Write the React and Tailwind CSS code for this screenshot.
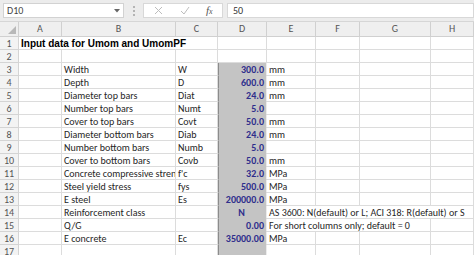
import React from "react";

const COLS = "grid grid-cols-[19px_43px_114px_42px_49px_49px_44px_71px_1fr]";
const FONT = { fontFamily: "Carlito, Lato, 'Liberation Sans', sans-serif" };

const rows = [
  [3, "Width", "W", "300.0", "mm"],
  [4, "Depth", "D", "600.0", "mm"],
  [5, "Diameter top bars", "Diat", "24.0", "mm"],
  [6, "Number top bars", "Numt", "5.0", ""],
  [7, "Cover to top bars", "Covt", "50.0", "mm"],
  [8, "Diameter bottom bars", "Diab", "24.0", "mm"],
  [9, "Number bottom bars", "Numb", "5.0", ""],
  [10, "Cover to bottom bars", "Covb", "50.0", "mm"],
  [11, "Concrete compressive strength", "f'c", "32.0", "MPa"],
  [12, "Steel yield stress", "fys", "500.0", "MPa"],
  [13, "E steel", "Es", "200000.0", "MPa"],
  [14, "Reinforcement class", "", "N", "AS 3600: N(default) or L; ACI 318: R(default) or S", 4, true],
  [15, "Q/G", "", "0.00", "For short columns only; default = 0", 3],
  [16, "E concrete", "Ec", "35000.00", "MPa"],
];

const cell = "h-[13px] leading-[13px] border-r border-b border-[#dcdcdc] overflow-hidden whitespace-nowrap";
const rh = "h-[13px] leading-[13px] bg-[#f3f3f3] border-r border-b border-[#d4d4d4] text-center text-[#555] text-[10px]";

function RowHead({ n }) {
  return <div className={rh}>{n}</div>;
}

function DCell({ v, center }) {
  return (
    <div
      className={`h-[13px] leading-[13px] bg-[#c4c4c4] border-l border-l-[#8c8c8c] border-r border-r-[#ececec] border-b border-b-[#c4c4c4] overflow-hidden whitespace-nowrap font-bold text-[#2e2e8c] text-[10px] pr-[2px] ${center ? "text-center" : "text-right"}`}
    >
      {v}
    </div>
  );
}

export default function App() {
  return (
    <div className="w-[474px] h-[255px] overflow-hidden bg-white text-[#262626]" style={FONT}>
      {/* formula bar */}
      <div className="h-[22px] bg-[#ececec] flex items-start pt-[3px] border-b border-[#d6d6d6]">
        <div className="ml-[3px] w-[121px] h-[15px] bg-white border border-[#d2d2d2] flex items-center justify-between px-[3px] text-[10px] text-[#444]">
          <span>D10</span>
          <svg width="6" height="4" viewBox="0 0 6 4"><path d="M0 0 L6 0 L3 3.5 Z" fill="#666" /></svg>
        </div>
        <div className="w-[19px] h-[15px] flex flex-col items-center justify-center gap-[2px]">
          <span className="w-[2px] h-[2px] bg-[#b4b4b4]" />
          <span className="w-[2px] h-[2px] bg-[#b4b4b4]" />
          <span className="w-[2px] h-[2px] bg-[#b4b4b4]" />
        </div>
        <div className="w-[80px] h-[15px] bg-white border border-[#d8d8d8] flex items-center">
          <svg className="ml-[10px]" width="9" height="9" viewBox="0 0 9 9"><path d="M1 1 L8 8 M8 1 L1 8" stroke="#bdbdbd" strokeWidth="1" /></svg>
          <svg className="ml-[17px]" width="10" height="9" viewBox="0 0 10 9"><path d="M1 5 L4 8 L9 1" stroke="#bdbdbd" strokeWidth="1" fill="none" /></svg>
          <span className="ml-[16px] italic text-[11px] text-[#555]" style={{ fontFamily: "'Liberation Serif', serif" }}>
            f<span className="text-[8px]">x</span>
          </span>
        </div>
        <div className="ml-[4px] flex-1 h-[15px] bg-white border border-[#d8d8d8] text-[10px] leading-[13px] pl-[5px] text-[#333]">
          50
        </div>
      </div>

      {/* column headers */}
      <div className={`${COLS} h-[15px] bg-[#efefef] text-[10px] text-[#555] leading-[14px]`}>
        <div className="border-r border-b border-[#d0d0d0] relative">
          <svg className="absolute right-[2px] bottom-[2px]" width="8" height="8" viewBox="0 0 8 8"><path d="M8 0 L8 8 L0 8 Z" fill="#b8b8b8" /></svg>
        </div>
        {["A", "B", "C", "D", "E", "F", "G", "H"].map((c) => (
          <div key={c} className="border-r border-b border-[#d0d0d0] text-center">{c}</div>
        ))}
      </div>

      {/* row 1 */}
      <div className={`${COLS} text-[10px]`}>
        <RowHead n={1} />
        <div className={`${cell} col-span-3 font-bold text-black pl-[2px]`} style={{ fontFamily: "'Liberation Sans', Arial, sans-serif" }}>
          Input data for Umom and UmomPF
        </div>
        <div className={cell} />
        <div className={cell} />
        <div className={cell} />
        <div className={cell} />
        <div className={cell} />
      </div>

      {/* row 2 */}
      <div className={`${COLS} text-[10px]`}>
        <RowHead n={2} />
        {Array.from({ length: 8 }).map((_, i) => (
          <div key={i} className={cell} />
        ))}
      </div>

      {rows.map(([n, label, sym, val, unit, span, center]) => {
        const s = span || 1;
        return (
          <div key={n} className={`${COLS} text-[10px]`}>
            <RowHead n={n} />
            <div className={cell} />
            <div className={`${cell} pl-[2px]`}>{label}</div>
            <div className={`${cell} pl-[2px]`}>{sym}</div>
            <DCell v={val} center={center} />
            <div className={`${cell} pl-[2px] ${s === 4 ? "col-span-4" : s === 3 ? "col-span-3" : ""}`}>{unit}</div>
            {s < 2 && <div className={cell} />}
            {s < 3 && <div className={cell} />}
            {s < 4 && <div className={cell} />}
          </div>
        );
      })}

      {/* row 17 */}
      <div className={`${COLS} text-[10px]`}>
        <RowHead n={17} />
        <div className={cell} />
        <div className={cell} />
        <div className={cell} />
        <DCell v="" />
        <div className={cell} />
        <div className={cell} />
        <div className={cell} />
        <div className={cell} />
      </div>
    </div>
  );
}
